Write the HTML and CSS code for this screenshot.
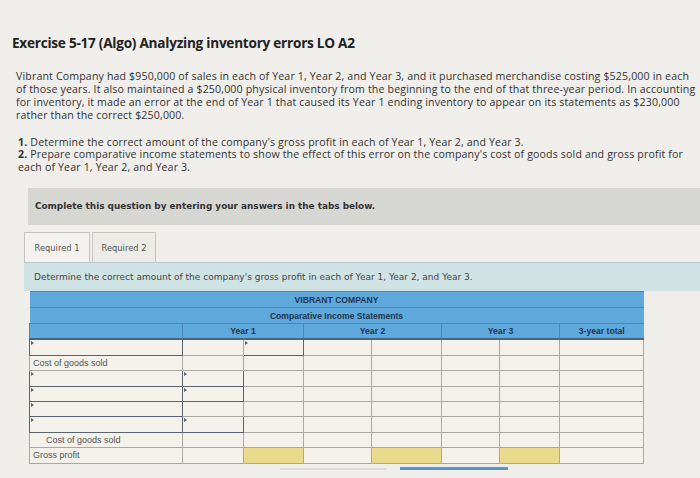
FILE: index.html
```html
<!DOCTYPE html>
<html>
<head>
<meta charset="utf-8">
<link rel="stylesheet" href="styles.css">
</head>
<body>
<div class="page">
  <h1 class="title">Exercise 5-17 (Algo) Analyzing inventory errors LO A2</h1>
  <div class="para">
    <span class="line">Vibrant Company had $950,000 of sales in each of Year 1, Year 2, and Year 3, and it purchased merchandise costing $525,000 in each</span>
    <span class="line">of those years. It also maintained a $250,000 physical inventory from the beginning to the end of that three-year period. In accounting</span>
    <span class="line">for inventory, it made an error at the end of Year 1 that caused its Year 1 ending inventory to appear on its statements as $230,000</span>
    <span class="line">rather than the correct $250,000.</span>
  </div>
  <div class="list">
    <span class="line"><b>1.</b> Determine the correct amount of the company's gross profit in each of Year 1, Year 2, and Year 3.</span>
    <span class="line"><b>2.</b> Prepare comparative income statements to show the effect of this error on the company's cost of goods sold and gross profit for</span>
    <span class="line">each of Year 1, Year 2, and Year 3.</span>
  </div>
  <div class="banner">Complete this question by entering your answers in the tabs below.</div>
  <div class="tabs">
    <div class="tab active">Required 1</div>
    <div class="tab">Required 2</div>
  </div>
  <div class="instr">Determine the correct amount of the company's gross profit in each of Year 1, Year 2, and Year 3.</div>
  <table class="stmt">
    <colgroup>
      <col class="c0"><col class="c1"><col class="c2"><col class="c3"><col class="c4"><col class="c5"><col class="c6"><col class="c7">
    </colgroup>
    <thead>
      <tr class="h1"><th colspan="8">VIBRANT COMPANY</th></tr>
      <tr class="h2"><th colspan="8">Comparative Income Statements</th></tr>
      <tr class="h3"><th></th><th colspan="2">Year 1</th><th colspan="2">Year 2</th><th colspan="2">Year 3</th><th>3-year total</th></tr>
    </thead>
    <tbody>
      <tr><td class="in"></td><td></td><td class="in"></td><td></td><td></td><td></td><td></td><td></td></tr>
      <tr><td class="lbl">Cost of goods sold</td><td></td><td></td><td></td><td></td><td></td><td></td><td></td></tr>
      <tr><td class="in"></td><td class="in"></td><td></td><td></td><td></td><td></td><td></td><td></td></tr>
      <tr><td class="in"></td><td class="in"></td><td></td><td></td><td></td><td></td><td></td><td></td></tr>
      <tr><td class="in"></td><td></td><td></td><td></td><td></td><td></td><td></td><td></td></tr>
      <tr><td class="in"></td><td class="in"></td><td></td><td></td><td></td><td></td><td></td><td></td></tr>
      <tr><td class="lbl ind">Cost of goods sold</td><td></td><td></td><td></td><td></td><td></td><td></td><td></td></tr>
      <tr><td class="lbl">Gross profit</td><td></td><td class="yel"></td><td></td><td class="yel"></td><td></td><td class="yel"></td><td></td></tr>
    </tbody>
  </table>
  <div class="scroll"><div class="track"></div><div class="thumb"></div></div>
</div>
</body>
</html>
```
FILE: styles.css
```css
html, body {
  margin: 0;
  padding: 0;
  background: #efeeea;
  color: #2b2b2b;
}
.page {
  width: 700px;
  height: 478px;
  overflow: hidden;
  font-family: "Open Sans", "Liberation Sans", sans-serif;
}
.title {
  margin: 0;
  padding: 34px 0 0 12px;
  font-size: 13.6px;
  font-weight: 700;
  letter-spacing: -0.25px;
  line-height: 18px;
  color: #222;
}
.line {
  display: block;
  white-space: nowrap;
}
.para {
  padding: 18px 0 0 16px;
  font-size: 10.6px;
  line-height: 12.9px;
  letter-spacing: 0.15px;
  color: #333;
}
.list {
  padding: 14px 0 0 18px;
  font-size: 10.6px;
  line-height: 12.6px;
  letter-spacing: 0.15px;
  color: #333;
}
.banner {
  margin: 15px 0 0 28px;
  height: 37px;
  background: #d6d6d3;
  font-family: "DejaVu Sans", Verdana, sans-serif;
  font-weight: 700;
  font-size: 8.9px;
  line-height: 36px;
  padding-left: 7px;
  color: #333;
}
.tabs {
  display: flex;
  gap: 2px;
  margin: 7px 0 0 24px;
  height: 30px;
}
.tab {
  width: 64px;
  height: 30px;
  box-sizing: border-box;
  border: 1px solid #c4c4c0;
  border-bottom: none;
  background: #ecebe6;
  font-family: "DejaVu Sans", Verdana, sans-serif;
  font-size: 8.3px;
  line-height: 30px;
  text-align: center;
  color: #555;
}
.tab.active {
  width: 66px;
  background: #f3f2ee;
}
.instr {
  margin-left: 24px;
  height: 28px;
  background: #cfe2e4;
  border-top: 1px solid #b9c9cb;
  font-family: "DejaVu Sans", Verdana, sans-serif;
  font-size: 9px;
  line-height: 28px;
  padding-left: 10px;
  color: #444;
}
.stmt {
  margin: 0 0 0 29px;
  border-collapse: collapse;
  table-layout: fixed;
  width: 614px;
  font-family: "Liberation Sans", Arial, sans-serif;
}
.c0 { width: 153px; }
.c1 { width: 61px; }
.c2 { width: 60px; }
.c3 { width: 68px; }
.c4 { width: 70px; }
.c5 { width: 58px; }
.c6 { width: 60px; }
.c7 { width: 84px; }
.stmt th {
  background: #5ea8dc;
  color: #1f3550;
  font-size: 8.6px;
  font-weight: 700;
  padding: 0;
  text-align: center;
  border-bottom: 1px solid #4a88b8;
}
.h1 th { height: 15px; border-top: 1px solid #4a88b8; }
.h2 th { height: 15px; }
.h3 th { height: 14px; border-left: 1px solid #4a88b8; border-bottom: 2px solid #47657d; }
.stmt td {
  height: 14.4px;
  padding: 0;
  background: #f3f1e9;
  border: 1px solid #a9a9a4;
  font-size: 9px;
  color: #555;
  position: relative;
}
.stmt td.lbl { padding-left: 3px; }
.stmt td.ind { padding-left: 16px; }
.stmt td.in {
  border: 1.5px solid #5b6270;
}
.stmt td.in::before {
  content: "";
  position: absolute;
  left: 1px;
  top: 1px;
  border-top: 2px solid transparent;
  border-bottom: 2px solid transparent;
  border-left: 3px solid #5b6270;
}
.stmt td.yel {
  background: #eadb8c;
}
.scroll {
  position: relative;
  height: 6px;
  margin-top: 3px;
}
.track {
  position: absolute;
  left: 280px;
  top: 1px;
  width: 107px;
  height: 2px;
  background: #dcdcd8;
}
.thumb {
  position: absolute;
  left: 400px;
  top: 0;
  width: 108px;
  height: 3px;
  background: #5c95c4;
}
```
